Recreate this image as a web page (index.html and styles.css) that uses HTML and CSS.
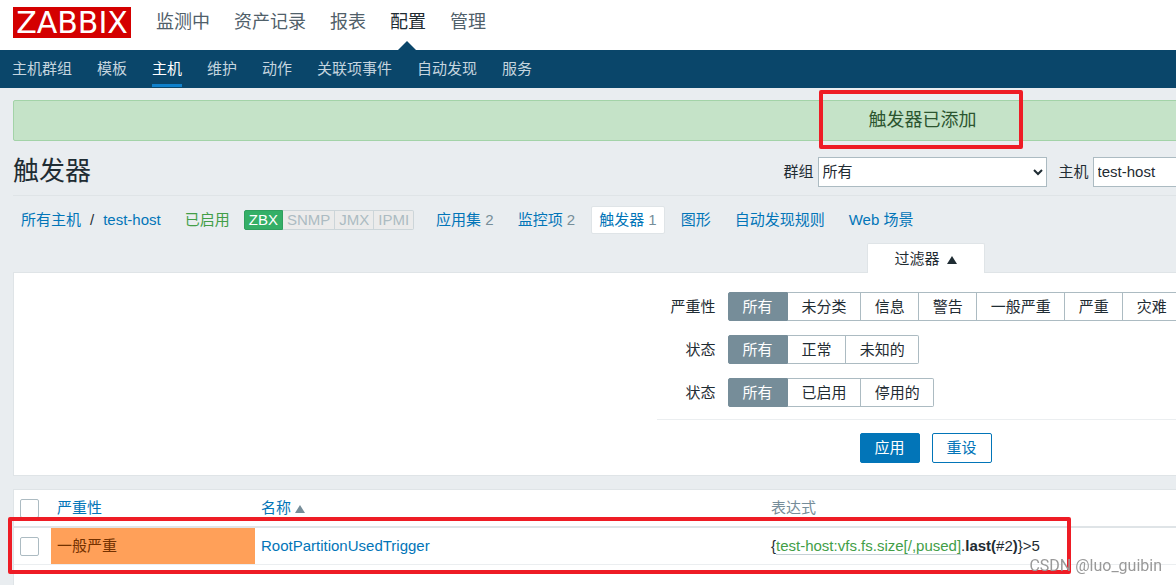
FILE: index.html
```html
<!DOCTYPE html>
<html lang="zh-CN">
<head>
  <meta charset="utf-8">
  <title>触发器</title>
  <link rel="stylesheet" href="styles.css">
</head>
<body>
<div class="page">
  <header class="top">
    <a class="logo" href="#">ZABBIX</a>
    <nav class="top-nav">
      <a href="#">监测中</a>
      <a href="#">资产记录</a>
      <a href="#">报表</a>
      <a href="#" class="selected">配置</a>
      <a href="#">管理</a>
    </nav>
  </header>
  <nav class="sub-nav">
    <a href="#">主机群组</a>
    <a href="#">模板</a>
    <a href="#" class="selected">主机</a>
    <a href="#">维护</a>
    <a href="#">动作</a>
    <a href="#">关联项事件</a>
    <a href="#">自动发现</a>
    <a href="#">服务</a>
  </nav>

  <main>
    <div class="msg-good">
      <span class="msg-text">触发器已添加<i class="mark mark-msg"></i></span>
    </div>

    <div class="title-row">
      <h1>触发器</h1>
      <form class="title-form">
        <label for="groupid">群组</label>
        <select id="groupid"><option>所有</option></select>
        <label for="hostid">主机</label>
        <select id="hostid"><option>test-host</option></select>
      </form>
    </div>

    <div class="object-group">
      <div class="crumbs"><a href="#">所有主机</a><span>/</span><a href="#">test-host</a></div>
      <span class="green">已启用</span>
      <div class="status">
        <span class="status-on">ZBX</span><span>SNMP</span><span>JMX</span><span>IPMI</span>
      </div>
      <nav class="host-nav">
        <a href="#">应用集 <sup>2</sup></a>
        <a href="#">监控项 <sup>2</sup></a>
        <a href="#" class="selected">触发器 <sup>1</sup></a>
        <a href="#">图形</a>
        <a href="#">自动发现规则</a>
        <a href="#">Web 场景</a>
      </nav>
    </div>

    <div class="filter-tab">
      <button type="button" class="filter-btn">过滤器 <i class="arrow-up"></i></button>
    </div>
    <form class="filter">
      <div class="filter-fields">
        <span class="field-name">严重性</span>
        <div class="radios">
          <label><input type="radio" name="severity" checked><span>所有</span></label>
          <label><input type="radio" name="severity"><span>未分类</span></label>
          <label><input type="radio" name="severity"><span>信息</span></label>
          <label><input type="radio" name="severity"><span>警告</span></label>
          <label><input type="radio" name="severity"><span>一般严重</span></label>
          <label><input type="radio" name="severity"><span>严重</span></label>
          <label><input type="radio" name="severity"><span>灾难</span></label>
        </div>
        <span class="field-name">状态</span>
        <div class="radios">
          <label><input type="radio" name="state" checked><span>所有</span></label>
          <label><input type="radio" name="state"><span>正常</span></label>
          <label><input type="radio" name="state"><span>未知的</span></label>
        </div>
        <span class="field-name">状态</span>
        <div class="radios">
          <label><input type="radio" name="status" checked><span>所有</span></label>
          <label><input type="radio" name="status"><span>已启用</span></label>
          <label><input type="radio" name="status"><span>停用的</span></label>
        </div>
      </div>
      <div class="filter-buttons">
        <button type="button" class="btn">应用</button>
        <button type="button" class="btn btn-alt">重设</button>
      </div>
    </form>

    <div class="list">
      <table>
        <colgroup>
          <col class="col-check"><col class="col-severity"><col class="col-name"><col>
        </colgroup>
        <thead>
          <tr>
            <th><input type="checkbox" aria-label="全选"></th>
            <th><a href="#">严重性</a></th>
            <th><a href="#">名称 <i class="arrow-up arrow-grey"></i></a></th>
            <th>表达式</th>
          </tr>
        </thead>
        <tbody>
          <tr>
            <td><input type="checkbox" aria-label="RootPartitionUsedTrigger"></td>
            <td class="average">一般严重</td>
            <td><a href="#">RootPartitionUsedTrigger</a></td>
            <td>{<a href="#" class="item">test-host:vfs.fs.size[/,pused]</a>.<b>last(</b>#2<b>)</b>}&gt;5</td>
          </tr>
        </tbody>
      </table>
      <i class="mark mark-row"></i>
    </div>
  </main>
</div>
<div class="watermark">CSDN @luo_guibin</div>
</body>
</html>
```
FILE: styles.css
```css
* {
  box-sizing: border-box;
}

body {
  margin: 0;
  height: 100vh;
  overflow: hidden;
  background-color: #e9edf0;
  color: #1f2c33;
  font-family: "Liberation Sans", "Noto Sans CJK SC", sans-serif;
  font-size: 15px;
  line-height: 20px;
}

a {
  color: #0275b8;
  text-decoration: none;
}

button, select {
  font: inherit;
  color: inherit;
}

/* wider than the window, the right part runs out of view */
.page {
  width: 157.5vw;
}

/* header */
.top {
  display: flex;
  align-items: center;
  height: 50px;
  padding: 0 13px 6px;
  background-color: #fff;
}

.logo {
  width: 118px;
  background-color: #d40000;
  color: #fff;
  font-family: "DejaVu Sans", sans-serif;
  font-size: 30px;
  line-height: 31px;
  text-align: center;
}

.top-nav {
  display: flex;
  gap: 24px;
  margin-left: 25px;
  font-size: 18px;
  line-height: 44px;
}

.top-nav a {
  position: relative;
  color: #50606a;
}

.top-nav .selected {
  color: #1f2c33;
}

.top-nav .selected::after {
  content: "";
  position: absolute;
  left: 50%;
  bottom: -6px;
  margin-left: -10px;
  border: 9px solid transparent;
  border-top: 0;
  border-bottom-color: #0a466a;
}

.sub-nav {
  display: flex;
  gap: 25px;
  height: 38px;
  padding: 0 12px;
  background-color: #0a466a;
}

.sub-nav a {
  height: 37px;
  line-height: 37px;
  color: #c5d5df;
}

.sub-nav .selected {
  color: #fff;
  border-bottom: 3px solid #0f81cc;
}

main {
  padding: 12px 14px 0 13px;
}

.msg-good {
  padding: 9px 6px 9px 0;
  background-color: #c5e3c8;
  border: 1px solid #a3d3a8;
  border-radius: 2px;
  color: #2c5530;
  font-size: 18px;
  line-height: 21px;
  text-align: center;
}

.msg-text {
  position: relative;
}

/* red highlight frames */
.mark {
  position: absolute;
  border: 4px solid #ee1c25;
  border-radius: 2px;
}

.mark-msg {
  top: -20px;
  bottom: -19px;
  left: -50px;
  right: -46px;
}

.mark-row {
  top: 27px;
  left: -6px;
  width: 1063px;
  height: 57px;
}

.title-row {
  display: grid;
  grid-template-columns: 42% 1fr;
  align-items: center;
  padding: 14px 0 7px;
  border-bottom: 1px solid #dfe4e7;
}

h1 {
  margin: 0;
  font-size: 26px;
  font-weight: normal;
  line-height: 33px;
}

.title-form {
  display: flex;
  align-items: center;
  padding-left: 4px;
}

.title-form select {
  width: 229px;
  height: 30px;
  margin: 0 12px 0 4px;
  border: 1px solid #acbbc2;
  border-radius: 0;
  background-color: #fff;
}

/* host line */
.object-group {
  display: flex;
  align-items: center;
  height: 47px;
  padding: 0 8px;
}

.crumbs {
  display: flex;
  gap: 9px;
  margin-right: 24px;
}

.green {
  color: #429e47;
}

.status {
  display: flex;
  margin: 0 14px 0 14px;
  line-height: 18px;
}

.status span {
  padding: 0 4px;
  background-color: #ebebeb;
  border: 1px solid #ccd5d9;
  border-left-width: 0;
  color: #acbbc2;
}

.status span:last-child {
  border-radius: 0 2px 2px 0;
}

.status .status-on {
  border: 1px solid #2f9f5e;
  border-radius: 2px 0 0 2px;
  background-color: #34af67;
  color: #fff;
}

.host-nav {
  display: flex;
  gap: 8px;
}

.host-nav a {
  padding: 3px 7px;
  border: 1px solid transparent;
  border-radius: 2px;
}

.host-nav .selected {
  background-color: #fff;
  border-color: #dfe4e7;
}

.host-nav sup {
  color: #768d99;
  font-size: 15px;
  line-height: 1;
  vertical-align: baseline;
}

/* filter */
.filter-tab {
  display: flex;
  justify-content: center;
}

.filter-btn {
  position: relative;
  z-index: 1;
  width: 118px;
  height: 30px;
  margin-bottom: -1px;
  padding: 0;
  background-color: #fff;
  border: 1px solid #dfe4e7;
  border-bottom: 0;
  border-radius: 2px 2px 0 0;
}

.arrow-up {
  display: inline-block;
  margin-left: 3px;
  border: 5px solid transparent;
  border-top: 0;
  border-bottom: 8px solid #1f2c33;
}

.arrow-grey {
  margin-left: 0;
  border-bottom-color: #768d99;
}

.filter {
  display: flex;
  flex-direction: column;
  align-items: center;
  padding: 19px 0 12px;
  background-color: #fff;
  border: 1px solid #dfe4e7;
}

.filter-fields {
  display: grid;
  grid-template-columns: 59px 1fr;
  gap: 14px 12px;
  width: 538px;
  padding-bottom: 12px;
  border-bottom: 1px solid #ebeef0;
}

.field-name {
  line-height: 29px;
  text-align: right;
}

.radios {
  display: flex;
  white-space: nowrap;
}

.radios input {
  position: absolute;
  opacity: 0;
}

.radios span {
  display: block;
  padding: 0 13px 0 14px;
  border: 1px solid #acbbc2;
  border-left: 0;
  line-height: 27px;
}

.radios label:first-child span {
  padding: 0 14px;
  border-left: 1px solid #acbbc2;
  border-radius: 2px 0 0 2px;
}

.radios label:last-child span {
  border-radius: 0 2px 2px 0;
}

.radios input:checked + span {
  background-color: #768d99;
  border-color: #768d99 !important;
  color: #fff;
}

.filter-buttons {
  display: flex;
  gap: 12px;
  padding-top: 13px;
}

.btn {
  width: 60px;
  height: 30px;
  padding: 0;
  background-color: #0275b8;
  border: 1px solid #0275b8;
  border-radius: 2px;
  color: #fff;
}

.btn-alt {
  background-color: #fff;
  color: #0275b8;
}

/* trigger list */
.list {
  position: relative;
  min-height: 120px;
  margin-top: 13px;
  background-color: #fff;
  border: 1px solid #dfe4e7;
}

table {
  width: 100%;
  table-layout: fixed;
  border-collapse: separate;
  border-spacing: 0;
}

.col-check {
  width: 37px;
}

.col-severity {
  width: 204px;
}

.col-name {
  width: 510px;
}

th, td {
  height: 37px;
  padding: 0 6px;
  border-bottom: 1px solid #ebeef0;
  font-weight: normal;
  text-align: left;
}

th {
  height: 38px;
  border-bottom: 2px solid #dfe4e7;
  color: #768d99;
}

.average {
  background-color: #ffa059;
  color: #733100;
}

.item {
  color: #429e47;
  border-bottom: 1px solid #c5d0d6;
}

input[type="checkbox"] {
  display: block;
  appearance: none;
  width: 19px;
  height: 19px;
  margin: 0;
  background-color: #fff;
  border: 1px solid #acbbc2;
  border-radius: 2px;
}

input[type="checkbox"]:checked {
  background-color: #0275b8;
}

.watermark {
  position: fixed;
  right: 14px;
  bottom: 9px;
  color: #999;
  font-family: Roboto, sans-serif;
  font-size: 16px;
}
```
